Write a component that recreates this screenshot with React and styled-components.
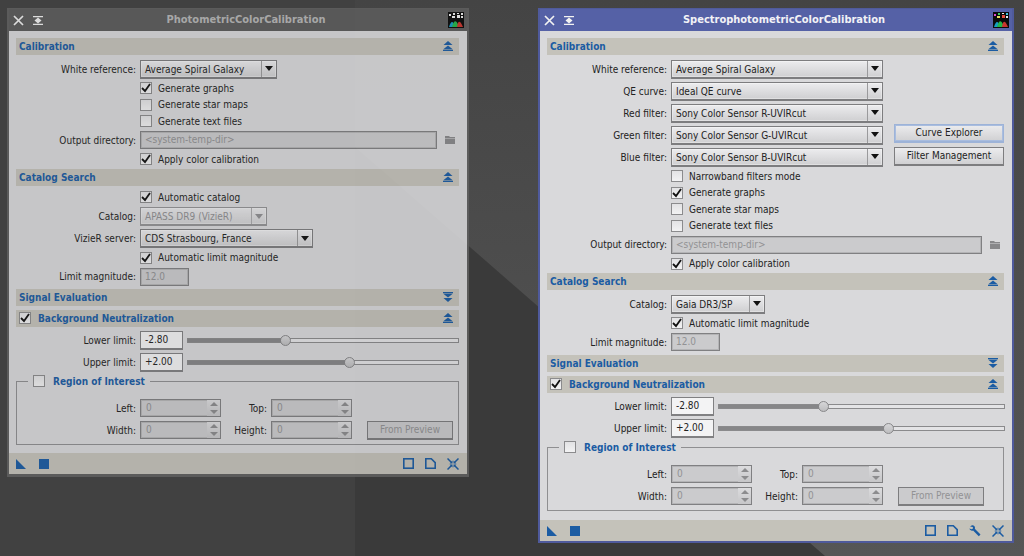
import React from "react";
import styled, { createGlobalStyle } from "styled-components";

const GlobalStyle = createGlobalStyle`
  html, body {
    margin: 0;
    padding: 0;
    background: #3c3c3c;
  }
  * {
    box-sizing: border-box;
  }
`;

const Desktop = styled.div`
  position: relative;
  width: 1024px;
  height: 556px;
  overflow: hidden;
  font-family: "DejaVu Sans Condensed", "DejaVu Sans", sans-serif;
  font-stretch: condensed;
  font-size: 10px;
  color: #222;
`;

const Wallpaper = styled.svg`
  position: absolute;
  inset: 0;
`;

const Window = styled.div`
  position: absolute;
  left: ${(p) => p.$left}px;
  top: 8px;
  width: ${(p) => p.$width}px;
  height: ${(p) => p.$height}px;
  display: flex;
  flex-direction: column;
  background: #d9d9db;
  border: 2px solid ${(p) => (p.$active ? "#4f5a9c" : "#5f5f5f")};
  border-top-width: 1px;
  border-bottom-width: ${(p) => (p.$active ? 2 : 3)}px;
  opacity: ${(p) => (p.$active ? 1 : 0.88)};
`;

const TitleBar = styled.div`
  display: flex;
  align-items: center;
  height: 22px;
  flex: none;
  padding: 0 3px 0 4px;
  background: ${(p) => (p.$active ? "#5561a6" : "#5c5c5c")};
  color: ${(p) => (p.$active ? "#f2f2f6" : "#b6b6b6")};
`;

const TitleIcon = styled.svg`
  flex: none;
  margin-right: 9px;
`;

const TitleText = styled.div`
  flex: 1;
  padding: 0 8px 2px 0;
  text-align: center;
  font-weight: bold;
  font-size: 11px;
`;

const Panel = styled.div`
  flex: 1;
  display: flex;
  flex-direction: column;
  padding: 7px 8px 0 7px;
`;

const SectionBar = styled.div`
  display: flex;
  align-items: center;
  flex: none;
  height: 17px;
  margin-top: ${(p) => p.$mt || 0}px;
  padding: 0 6px 1px 3px;
  background: #c4c2ba;
  color: #1b5ca3;
  font-weight: bold;
`;

const SectionTitle = styled.span`
  flex: 1;
  margin-left: ${(p) => p.$ml || 0}px;
`;

const SectionBody = styled.div`
  display: flex;
  flex-direction: column;
  padding-top: ${(p) => p.$pt ?? 3}px;
`;

const Row = styled.div`
  display: flex;
  align-items: center;
  gap: 4px;
  flex: none;
  height: ${(p) => p.$h || 22}px;
`;

const Label = styled.label`
  flex: none;
  width: ${(p) => p.$w || 120}px;
  text-align: right;
  white-space: nowrap;
`;

const Spacer = styled.div`
  flex: none;
  width: 120px;
`;

const Box = styled.span`
  display: inline-flex;
  align-items: center;
  justify-content: center;
  flex: none;
  width: 12px;
  height: 12px;
  background: linear-gradient(#e2e2e4, #f2f2f3);
  border: 1px solid #8b8b8d;
  color: #111;
`;

const CheckWrap = styled.div`
  display: flex;
  align-items: center;
  gap: 6px;
`;

const Combo = styled.div`
  display: flex;
  align-items: stretch;
  flex: none;
  width: ${(p) => p.$w}px;
  height: 19px;
  border: 1px solid #7d7d7f;
  border-bottom-width: 2px;
  box-shadow: inset 0 0 0 1px rgba(255, 255, 255, 0.35);
  background: linear-gradient(#ececee, #cfcfd1);
  color: ${(p) => (p.$off ? "#77777a" : "#222")};
  opacity: ${(p) => (p.$off ? 0.75 : 1)};
`;

const ComboText = styled.span`
  flex: 1;
  padding-left: 4px;
  line-height: 17px;
  white-space: nowrap;
`;

const ComboArrow = styled.span`
  display: flex;
  align-items: center;
  justify-content: center;
  flex: none;
  width: 15px;
  border-left: 1px solid #9a9a9c;
  &::after {
    content: "";
    border-left: 4.5px solid transparent;
    border-right: 4.5px solid transparent;
    border-top: 5px solid ${(p) => (p.$off ? "#77777a" : "#111")};
  }
`;

const TextInput = styled.div`
  flex: none;
  width: ${(p) => p.$w}px;
  height: ${(p) => (p.$off ? 18 : 19)}px;
  padding-left: 4px;
  line-height: 16px;
  border: 1px solid #808082;
  border-bottom-width: ${(p) => (p.$off ? 1 : 2)}px;
  box-shadow: ${(p) => (p.$off ? "inset 0 0 0 1px rgba(128, 128, 130, 0.3)" : "none")};
  background: ${(p) => (p.$off ? "#cbcbcd" : "#f3f3f4")};
  color: ${(p) => (p.$off ? "#929294" : "#222")};
  white-space: nowrap;
`;

const FolderIcon = styled.svg`
  flex: none;
  margin-left: 4px;
`;

const SliderTrack = styled.div`
  position: relative;
  flex: none;
  width: ${(p) => p.$w}px;
  height: 5px;
  border: 1px solid #8a8a8c;
  background: #e4e4e6;
`;

const SliderFill = styled.div`
  height: 100%;
  background: #868688;
`;

const SliderThumb = styled.div`
  position: absolute;
  top: -4px;
  width: 11px;
  height: 11px;
  margin-left: -5.5px;
  border: 1px solid #88888a;
  border-radius: 50%;
  background: linear-gradient(#d6d6d8, #bdbdbf);
`;

const Group = styled.fieldset`
  flex: none;
  height: 70px;
  margin: 2px 0 0;
  padding: 10px 0 0;
  border: 1px solid #8f8f91;
  border-radius: 0;
  min-width: 0;
`;

const GroupLegend = styled.legend`
  display: flex;
  align-items: center;
  gap: 8px;
  margin-left: 11px;
  padding: 0 5px;
  color: #1b5ca3;
  font-weight: bold;
`;

const SpinBox = styled.div`
  display: flex;
  flex: none;
  width: 81px;
  height: 18px;
  border: 1px solid #808082;
  box-shadow: inset 0 0 0 1px rgba(128, 128, 130, 0.3);
  background: #cbcbcd;
  color: #929294;
`;

const SpinValue = styled.span`
  flex: 1;
  padding-left: 5px;
  line-height: 16px;
`;

const SpinArrows = styled.span`
  display: flex;
  flex-direction: column;
  justify-content: space-around;
  align-items: center;
  flex: none;
  width: 13px;
  background: linear-gradient(#dcdcde, #c6c6c8);
`;

const SpinArrow = styled.span`
  border-left: 4px solid transparent;
  border-right: 4px solid transparent;
  border-${(p) => (p.$down ? "top" : "bottom")}: 4px solid #8c8c8e;
`;

const Button = styled.div`
  flex: none;
  display: flex;
  align-items: center;
  justify-content: center;
  width: ${(p) => p.$w}px;
  height: 19px;
  margin-left: ${(p) => p.$ml || 0}px;
  margin-bottom: ${(p) => p.$mb || 0}px;
  padding-bottom: 1px;
  border: 1px solid ${(p) => (p.$focus ? "#9db3d8" : "#7d7d7f")};
  box-shadow: ${(p) => (p.$focus ? "inset 0 0 0 1px #a9bddf" : "none")};
  border-bottom-width: 2px;
  background: ${(p) => (p.$off ? "#cbcbcd" : "linear-gradient(#ececee, #d0d0d2)")};
  color: ${(p) => (p.$off ? "#929294" : "#222")};
  white-space: nowrap;
`;

const Footer = styled.div`
  display: flex;
  align-items: center;
  flex: none;
  height: 21px;
  margin-top: auto;
  padding: 0 8px 0 7px;
  gap: 11px;
  background: #c4c2ba;
  color: #1b5ca3;
`;

const FooterGap = styled.div`
  flex: 1;
`;

const FooterLeftIcon = styled.svg`
  flex: none;
  margin-right: 2px;
`;

const Check = ({ on, children }) => (
  <CheckWrap>
    <Box>
      {on && (
        <svg width="10" height="10" viewBox="0 0 10 10">
          <path d="M1 5l3 3 5-7" fill="none" stroke="currentColor" strokeWidth="1.8" />
        </svg>
      )}
    </Box>
    {children && <span>{children}</span>}
  </CheckWrap>
);

const CheckRow = ({ on, children, h = 16.5 }) => (
  <Row $h={h}>
    <Spacer />
    <Check on={on}>{children}</Check>
  </Row>
);

const ComboBox = ({ w, off, children }) => (
  <Combo $w={w} $off={off}>
    <ComboText>{children}</ComboText>
    <ComboArrow $off={off} />
  </Combo>
);

const Slider = ({ w, at }) => (
  <SliderTrack $w={w}>
    <SliderFill style={{ width: at }} />
    <SliderThumb style={{ left: at }} />
  </SliderTrack>
);

const Spin = () => (
  <SpinBox>
    <SpinValue>0</SpinValue>
    <SpinArrows>
      <SpinArrow />
      <SpinArrow $down />
    </SpinArrows>
  </SpinBox>
);

const CollapseIcon = ({ down }) => (
  <svg width="10" height="10" viewBox="0 0 10 10" fill="#1b5ca3">
    {down ? (
      <path d="M0 0h10v1H0zM0 1.500h10L5 5.500zM.5 6h9L5 10z" />
    ) : (
      <path d="M5 0l4.500 4h-9zM5 4.500l5 4H0zM0 9h10v1H0z" />
    )}
  </svg>
);

const CloseIcon = () => (
  <TitleIcon width="11" height="11" viewBox="0 0 11 11">
    <path d="M1 1l9 9M10 1l-9 9" stroke="#f2f2f2" strokeWidth="1.7" />
  </TitleIcon>
);

const ShadeIcon = () => (
  <TitleIcon width="10" height="9" viewBox="0 0 10 9">
    <path d="M0 0h10v1.200H0zM0 7.800h10V9H0zM5 1.500L8.500 4.500h-7zM1.500 4.500h7L5 7.500z" fill="#f2f2f2" />
  </TitleIcon>
);

const ProcessIcon = ({ bright }) => (
  <svg width="16" height="16" viewBox="0 0 16 16">
    <rect width="16" height="16" fill="#0a0a0a" />
    <g fill="#eee">
      <rect x="1" y="2" width="2" height="2" fill={bright ? "#d94ad0" : "#eee"} />
      <rect x="4" y="4" width="3" height="2" fill={bright ? "#e8e060" : "#eee"} />
      <rect x="5" y="1" width="2" height="2" fill={bright ? "#3dd060" : "#eee"} />
      <rect x="9" y="3" width="3" height="3" fill={bright ? "#e24a3c" : "#eee"} />
      <rect x="13" y="4" width="2" height="2" />
      <rect x="9" y="1" width="2" height="1" />
      <rect x="13" y="1" width="2" height="2" fill={bright ? "#3fc6e0" : "#eee"} />
    </g>
    <path d="M1 15C3 9 5 8 7 15z" fill="#169cc4" />
    <path d="M4 15C6 8 8 7 11 15z" fill="#23b548" />
    <path d="M9 15C10 8 12 8 15 15z" fill="#c9352d" />
  </svg>
);

const Folder = () => (
  <FolderIcon width="10" height="10" viewBox="0 0 10 10" fill="#88888a">
    <path d="M0 1h4l1 1h5v1H0zM0 3.600h10V9H0z" />
  </FolderIcon>
);

const FooterIcons = ({ wrench }) => (
  <Footer>
    <FooterLeftIcon width="10" height="10" viewBox="0 0 10 10" fill="currentColor">
      <path d="M0 0l10 10H0z" />
    </FooterLeftIcon>
    <svg width="10" height="10" viewBox="0 0 10 10" fill="currentColor">
      <rect width="10" height="10" />
    </svg>
    <FooterGap />
    <svg width="11" height="11" viewBox="0 0 11 11" fill="none" stroke="currentColor" strokeWidth="1.6">
      <rect x="0.800" y="0.800" width="9.400" height="9.400" />
    </svg>
    <svg width="11" height="11" viewBox="0 0 11 11" fill="none" stroke="currentColor" strokeWidth="1.6">
      <path d="M0.800 0.800h5.500l3.900 3.900v5.500H0.800z" />
    </svg>
    {wrench && (
      <svg width="12" height="12" viewBox="0 0 12 12" fill="currentColor">
        <path d="M1 1.500L3 0.300c1.600-.3 3 .8 3 2.500 0 .4 0 .7-.2 1l5.700 5.700-1.700 1.700-5.700-5.700c-1.600.6-3.200-.3-3.700-2L2.600 4.300 4 3.400 3.800 2z" />
      </svg>
    )}
    <svg width="12" height="12" viewBox="0 0 12 12" fill="none" stroke="currentColor" strokeWidth="1.500">
      <path d="M0.500 0.500L4.500 4.500M11.500 0.500L7.500 4.500M0.500 11.500L4.500 7.500M11.500 11.500L7.500 7.500" />
      <path d="M2.500 5.500h3v-3zM9.500 5.500h-3v-3zM2.500 6.500h3v3zM9.500 6.500h-3v3z" fill="currentColor" stroke="none" />
    </svg>
  </Footer>
);

const Neutralization = ({ sliderW, lowAt, highAt }) => (
  <>
    <SectionBar $mt={4}>
      <Check on />
      <SectionTitle $ml={7}>Background Neutralization</SectionTitle>
      <CollapseIcon />
    </SectionBar>
    <SectionBody $pt={2}>
      <Row>
        <Label>Lower limit:</Label>
        <TextInput $w={43}>-2.80</TextInput>
        <Slider w={sliderW} at={lowAt} />
      </Row>
      <Row>
        <Label>Upper limit:</Label>
        <TextInput $w={43}>+2.00</TextInput>
        <Slider w={sliderW} at={highAt} />
      </Row>
    </SectionBody>
  </>
);

const RegionOfInterest = () => (
  <Group>
    <GroupLegend>
      <Check />
      Region of Interest
    </GroupLegend>
    <Row>
      <Label $w={119}>Left:</Label>
      <Spin />
      <Label $w={42}>Top:</Label>
      <Spin />
    </Row>
    <Row>
      <Label $w={119}>Width:</Label>
      <Spin />
      <Label $w={42}>Height:</Label>
      <Spin />
      <Button $w={86} $off $ml={11}>From Preview</Button>
    </Row>
  </Group>
);

export default function App() {
  return (
    <Desktop>
      <GlobalStyle />
      <Wallpaper width="1024" height="556" viewBox="0 0 1024 556">
        <defs>
          <linearGradient id="wallLight" x1="0" y1="0" x2="0" y2="1">
            <stop offset="0" stopColor="#444444" />
            <stop offset="0.5" stopColor="#4d4d4d" />
            <stop offset="1" stopColor="#565656" />
          </linearGradient>
        </defs>
        <rect width="1024" height="556" fill="#414141" />
        <rect x="355" width="669" height="556" fill="#3a3a3a" />
        <path d="M355 0H1024V556H825L355 147z" fill="url(#wallLight)" />
      </Wallpaper>

      <Window $left={7} $width={462} $height={469}>
        <TitleBar>
          <CloseIcon />
          <ShadeIcon />
          <TitleText>PhotometricColorCalibration</TitleText>
          <ProcessIcon />
        </TitleBar>
        <Panel>
          <SectionBar>
            <SectionTitle>Calibration</SectionTitle>
            <CollapseIcon />
          </SectionBar>
          <SectionBody>
            <Row>
              <Label>White reference:</Label>
              <ComboBox w={137}>Average Spiral Galaxy</ComboBox>
            </Row>
            <CheckRow on>Generate graphs</CheckRow>
            <CheckRow>Generate star maps</CheckRow>
            <CheckRow>Generate text files</CheckRow>
            <Row $h={21}>
              <Label>Output directory:</Label>
              <TextInput $w={297} $off>&lt;system-temp-dir&gt;</TextInput>
              <Folder />
            </Row>
            <CheckRow on h={17}>Apply color calibration</CheckRow>
          </SectionBody>

          <SectionBar $mt={1.5}>
            <SectionTitle>Catalog Search</SectionTitle>
            <CollapseIcon />
          </SectionBar>
          <SectionBody>
            <CheckRow on>Automatic catalog</CheckRow>
            <Row>
              <Label>Catalog:</Label>
              <ComboBox w={127} off>APASS DR9 (VizieR)</ComboBox>
            </Row>
            <Row>
              <Label>VizieR server:</Label>
              <ComboBox w={173}>CDS Strasbourg, France</ComboBox>
            </Row>
            <CheckRow on>Automatic limit magnitude</CheckRow>
            <Row $h={21}>
              <Label>Limit magnitude:</Label>
              <TextInput $w={49} $off>12.0</TextInput>
            </Row>
          </SectionBody>

          <SectionBar $mt={2}>
            <SectionTitle>Signal Evaluation</SectionTitle>
            <CollapseIcon down />
          </SectionBar>
          <Neutralization sliderW={272} lowAt={97} highAt={161} />
          <RegionOfInterest />
        </Panel>
        <FooterIcons />
      </Window>

      <Window $active $left={538} $width={476} $height={535}>
        <TitleBar $active>
          <CloseIcon />
          <ShadeIcon />
          <TitleText>SpectrophotometricColorCalibration</TitleText>
          <ProcessIcon bright />
        </TitleBar>
        <Panel>
          <SectionBar>
            <SectionTitle>Calibration</SectionTitle>
            <CollapseIcon />
          </SectionBar>
          <SectionBody>
            <Row>
              <Label>White reference:</Label>
              <ComboBox w={212}>Average Spiral Galaxy</ComboBox>
            </Row>
            <Row>
              <Label>QE curve:</Label>
              <ComboBox w={212}>Ideal QE curve</ComboBox>
            </Row>
            <Row>
              <Label>Red filter:</Label>
              <ComboBox w={212}>Sony Color Sensor R-UVIRcut</ComboBox>
            </Row>
            <Row>
              <Label>Green filter:</Label>
              <ComboBox w={212}>Sony Color Sensor G-UVIRcut</ComboBox>
              <Button $w={110} $ml={7} $mb={4} $focus>Curve Explorer</Button>
            </Row>
            <Row>
              <Label>Blue filter:</Label>
              <ComboBox w={212}>Sony Color Sensor B-UVIRcut</ComboBox>
              <Button $w={110} $ml={7} $mb={2}>Filter Management</Button>
            </Row>
            <CheckRow>Narrowband filters mode</CheckRow>
            <CheckRow on>Generate graphs</CheckRow>
            <CheckRow>Generate star maps</CheckRow>
            <CheckRow>Generate text files</CheckRow>
            <Row $h={21}>
              <Label>Output directory:</Label>
              <TextInput $w={311} $off>&lt;system-temp-dir&gt;</TextInput>
              <Folder />
            </Row>
            <CheckRow on h={17}>Apply color calibration</CheckRow>
          </SectionBody>

          <SectionBar $mt={1}>
            <SectionTitle>Catalog Search</SectionTitle>
            <CollapseIcon />
          </SectionBar>
          <SectionBody>
            <Row>
              <Label>Catalog:</Label>
              <ComboBox w={94}>Gaia DR3/SP</ComboBox>
            </Row>
            <CheckRow on>Automatic limit magnitude</CheckRow>
            <Row $h={21}>
              <Label>Limit magnitude:</Label>
              <TextInput $w={49} $off>12.0</TextInput>
            </Row>
          </SectionBody>

          <SectionBar $mt={2.5}>
            <SectionTitle>Signal Evaluation</SectionTitle>
            <CollapseIcon down />
          </SectionBar>
          <Neutralization sliderW={287} lowAt={104} highAt={169} />
          <RegionOfInterest />
        </Panel>
        <FooterIcons wrench />
      </Window>
    </Desktop>
  );
}
